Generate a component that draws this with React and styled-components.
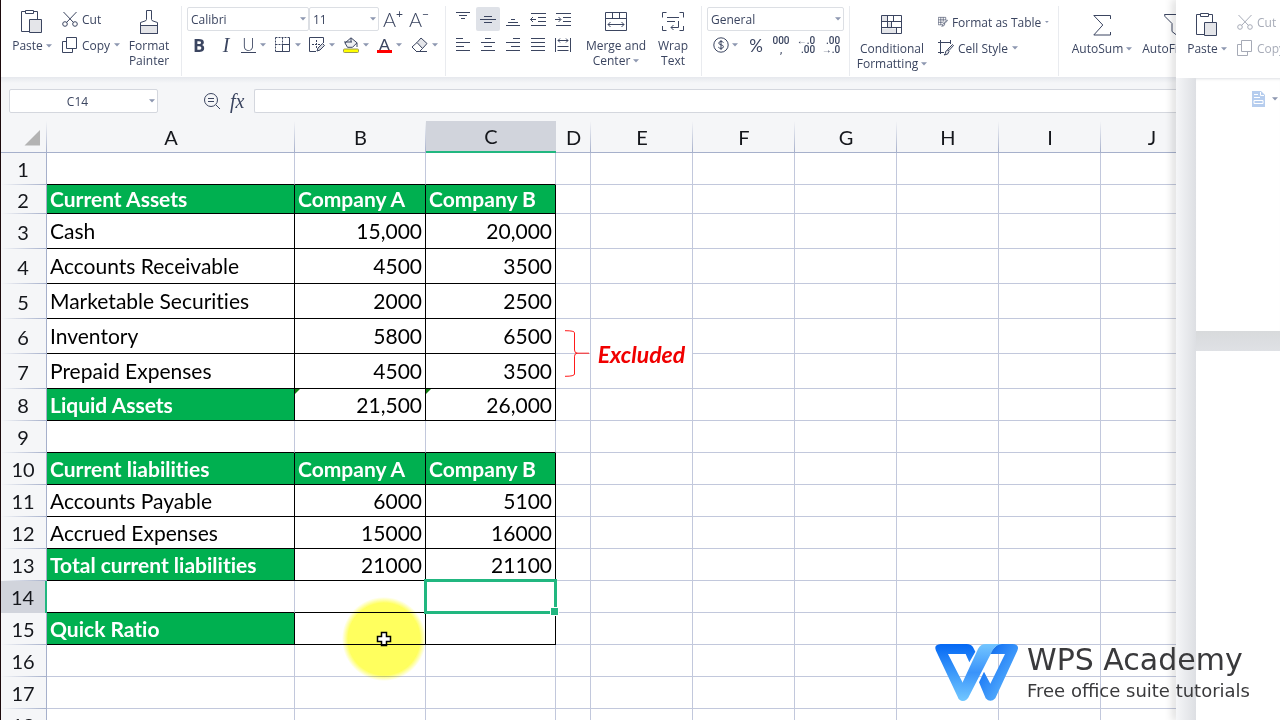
import React from 'react';
import styled, { createGlobalStyle, css } from 'styled-components';

const ink = '#3b4560';
const line = '#c2c8dc';
const headLine = '#a6b0cb';
const accent = '#21b780';
const green = '#00b050';

const GlobalStyle = createGlobalStyle`
  * {
    box-sizing: border-box;
  }

  body {
    margin: 0;
    overflow: hidden;
    background: #ffffff;
    font-family: 'Open Sans', 'Noto Sans', sans-serif;
    color: ${ink};
  }

  button, input, select {
    margin: 0;
    font: inherit;
    color: inherit;
  }
`;

const Desktop = styled.div`
  position: relative;
  display: flex;
  height: 100vh;
  overflow: hidden;
  border-left: 1px solid #1c0a0c;
`;

const SheetWindow = styled.main`
  flex: 1;
  min-width: 0;
  display: flex;
  flex-direction: column;
  overflow: hidden;
  background: #f5f6f8;
`;

const Ribbon = styled.header`
  position: relative;
  display: flex;
  flex: none;
  height: ${({ $tall }) => ($tall ? '78px' : '77px')};
  overflow: hidden;
  background: #ffffff;
  font-size: 12px;
`;

const RibbonShade = styled.div`
  flex: none;
  height: 6px;
  background: linear-gradient(#e6e8ed, #f5f6f8);
`;

const Group = styled.div`
  display: flex;
  flex: none;
  padding: 0 ${({ $right = 5 }) => $right}px 0 ${({ $left = 5 }) => $left}px;
  border-right: 1px solid;
  border-image: linear-gradient(#fff 7px, #e9ebef 7px, #e9ebef 75px, #fff 75px) 1;
`;

const Tools = styled.div`
  display: flex;
  flex: none;
  flex-direction: column;
  gap: 2px;
  width: ${({ $width }) => ($width ? `${$width}px` : 'auto')};
  padding-top: ${({ $top = 7 }) => $top}px;
  padding-left: ${({ $left = 0 }) => $left}px;
`;

const ToolRow = styled.div`
  display: flex;
  align-items: center;
  height: 24px;
  gap: ${({ $gap = 0 }) => $gap}px;
`;

const plainButton = css`
  border: 0;
  padding: 0;
  background: none;
  white-space: nowrap;
`;

const BigButton = styled.button`
  ${plainButton}
  display: flex;
  flex: none;
  flex-direction: column;
  align-items: center;
  gap: 4px;
  width: ${({ $width = 50 }) => $width}px;
  padding-top: ${({ $top = 10 }) => $top}px;
  line-height: 15px;
`;

const BigIcon = styled.span`
  display: flex;
  align-items: center;
  height: 24px;
`;

const LabelLine = styled.span`
  display: flex;
  justify-content: center;
  align-items: center;
  gap: 3px;
`;

const InlineButton = styled.button`
  ${plainButton}
  display: flex;
  align-items: center;
  gap: 4px;
  height: 24px;
  opacity: ${({ disabled }) => (disabled ? 0.45 : 1)};
`;

const ToolButton = styled.button`
  ${plainButton}
  display: flex;
  flex: none;
  justify-content: center;
  align-items: center;
  width: ${({ $width = 24 }) => $width}px;
  height: 24px;
  border-radius: 2px;
  background: ${({ $active }) => ($active ? '#dfe2e8' : 'none')};
`;

const SplitButton = styled.button`
  ${plainButton}
  display: flex;
  flex: none;
  align-items: center;
  gap: 4px;
  width: ${({ $width = 34 }) => $width}px;
  height: 24px;
`;

const Bold = styled.b`
  font-size: 18px;
  line-height: 20px;
`;

const Italic = styled.i`
  font-family: 'Liberation Serif', serif;
  font-size: 20px;
  line-height: 20px;
`;

const Underline = styled.span`
  width: 15px;
  border-bottom: 1px solid ${ink};
  font-family: Lato, sans-serif;
  font-weight: 300;
  font-size: 17px;
  line-height: 15px;
`;

const FontLetter = styled.span`
  display: flex;
  align-items: flex-start;
  font-family: Lato, sans-serif;
  font-weight: 300;
  font-size: 20px;
  line-height: 20px;

  sup {
    font-weight: 400;
    font-size: 12px;
    line-height: 10px;
  }
`;

const ColorLetter = styled.span`
  width: 15px;
  border-bottom: 3px solid #ff0000;
  font-family: Lato, sans-serif;
  font-size: 16px;
  line-height: 13px;
`;

const Percent = styled.span`
  font-family: Lato, sans-serif;
  font-size: 17px;
`;

const Digits = styled.span`
  font-family: Roboto, sans-serif;
  font-weight: 500;
  font-size: 10px;
  line-height: 9px;
  text-align: ${({ $align = 'center' }) => $align};
`;

const Field = styled.label`
  display: grid;
  flex: none;
  align-items: center;
  width: ${({ $width }) => $width}px;
  height: 24px;

  > * {
    grid-area: 1 / 1;
  }

  > svg {
    justify-self: end;
    margin-right: 3px;
    pointer-events: none;
  }
`;

const Select = styled.select`
  width: 100%;
  height: 24px;
  padding: 0 3px;
  appearance: none;
  border: 1px solid #dcdfe4;
  border-radius: 2px;
  background: #ffffff;
`;

const FormulaBar = styled.div`
  display: flex;
  flex: none;
  align-items: center;
  height: 38px;
  padding: 0 0 2px 8px;
  font-size: 12px;
`;

const NameBox = styled.input`
  width: 100%;
  height: 24px;
  padding: 0 12px 0 0;
  border: 1px solid #d4d7de;
  border-radius: 2px;
  background: #ffffff;
  text-align: center;
`;

const FormulaTools = styled.div`
  display: flex;
  align-items: center;
  gap: 9px;
  width: 96px;
  padding-left: 45px;
`;

const FormulaInput = styled.input`
  flex: 1;
  min-width: 0;
  height: 24px;
  border: 1px solid #d4d7de;
  border-right: 0;
  border-radius: 2px 0 0 2px;
  background: #ffffff;
`;

const Fx = styled.i`
  font-family: 'Liberation Serif', serif;
  font-size: 20px;
  line-height: 20px;
`;

const Grid = styled.table`
  flex: none;
  align-self: flex-start;
  width: max-content;
  table-layout: fixed;
  border-spacing: 0;
  background: #ffffff;
  color: #000000;
  font-family: Lato, 'Liberation Sans', sans-serif;
  font-size: 21px;
  font-variant-ligatures: none;
  line-height: 24px;
`;

const headCell = css`
  padding: 0;
  background: #f5f6f8;
  color: #15171c;
  font-weight: 400;
  font-size: 20px;
  text-align: center;
`;

const ColumnHead = styled.th`
  ${headCell}
  height: 32px;
  border-bottom: 1px solid ${headLine};
  background-image: linear-gradient(transparent, ${headLine});
  background-repeat: no-repeat;
  background-position: right top;
  background-size: 1px 100%;

  ${({ $selected }) =>
    $selected &&
    css`
      border-bottom: 2px solid ${accent};
      background: #d1d4dc;
    `}
`;

const Corner = styled(ColumnHead)`
  > svg {
    display: block;
    margin: 2px 7px 0 auto;
  }
`;

const RowHead = styled.th`
  ${headCell}
  padding-right: 1px;
  border-right: 1px solid ${headLine};
  background-image: linear-gradient(90deg, transparent, ${headLine});
  background-repeat: no-repeat;
  background-position: left bottom;
  background-size: 100% 1px;

  ${({ $selected }) =>
    $selected &&
    css`
      border-right: 2px solid ${accent};
      background: #d1d4dc;
    `}
`;

const Cell = styled.td`
  position: relative;
  height: ${({ $height }) => $height}px;
  padding: 0 3px;
  border-right: 1px solid ${({ $side }) => ($side ? '#000' : line)};
  border-bottom: 1px solid ${({ $under }) => ($under ? '#000' : line)};
  background: ${({ $filled }) => ($filled ? green : 'none')};
  color: ${({ $filled }) => ($filled ? '#fff' : '#000')};
  font-weight: ${({ $filled }) => ($filled ? 700 : 400)};
  text-align: ${({ $number }) => ($number ? 'right' : 'left')};
  white-space: nowrap;

  ${({ $flag }) =>
    $flag &&
    css`
      background: linear-gradient(135deg, #107c10 3px, transparent 4px);
    `}
`;

const NoteCell = styled(Cell)`
  padding: 0;
  color: #f00000;
  font-weight: 700;
  font-style: italic;
  font-size: 23px;
  text-align: center;
`;

const Brace = styled.svg`
  position: absolute;
  top: 11px;
  left: 9px;
  z-index: 1;
`;

const Selection = styled.div`
  position: absolute;
  inset: -2px;
  z-index: 1;
  border: 3px solid ${accent};

  &::after {
    content: '';
    position: absolute;
    right: -5px;
    bottom: -5px;
    width: 7px;
    height: 7px;
    border: 1px solid #ffffff;
    background: ${accent};
  }
`;

const Pointer = styled.div`
  position: absolute;
  top: -16px;
  left: 47px;
  z-index: 2;
  display: grid;
  place-items: center;
  width: 84px;
  height: 84px;
  background: radial-gradient(circle, #ffff5e 36px, transparent 42px);
  mix-blend-mode: multiply;
`;

const SideWindow = styled.aside`
  position: relative;
  display: flex;
  flex: none;
  flex-direction: column;
  width: 104px;
  overflow: hidden;
  background: #ffffff;
`;

const SideShadow = styled.div`
  position: relative;
  flex: none;
  width: 0;
  box-shadow: 0 0 8px 1px rgba(0, 0, 0, 0.5);
`;

const SideBody = styled.div`
  display: flex;
  flex: 1;
`;

const Gutter = styled.div`
  flex: none;
  width: 20px;
  background: linear-gradient(90deg, #f5f6f8, #dddfe3);
`;

const Pages = styled.div`
  display: flex;
  flex: 1;
  flex-direction: column;
  gap: 20px;
  background: linear-gradient(#ffffff 253px, #d8dadc 253px, #dfe1e5 273px);
`;

const Page = styled.section`
  flex: ${({ $height }) => ($height ? `0 0 ${$height}px` : '1')};
  padding: 13px 2px;
  background: #ffffff;
  box-shadow: ${({ $height }) => ($height ? 'inset 0 3px 3px -2px #dddfe3' : 'none')};
`;

const PasteOptions = styled.button`
  ${plainButton}
  display: flex;
  align-items: center;
  gap: 7px;
  margin-left: auto;
`;

const Watermark = styled.div`
  position: absolute;
  right: 30px;
  bottom: 16px;
  z-index: 5;
  display: flex;
  align-items: center;
  gap: 8px;
  color: #3a3a3c;
  font-family: 'DejaVu Sans', sans-serif;
`;

const Brand = styled.div`
  font-size: 30px;
  line-height: 36px;
`;

const Tagline = styled.div`
  font-size: 18px;
  line-height: 26px;
`;

const Icon = ({ w = 16, h = 16, children, ...rest }) => (
  <svg width={w} height={h} viewBox={`0 0 ${w} ${h}`} fill='none' stroke={ink} aria-hidden='true' {...rest}>
    {children}
  </svg>
);

const Caret = () => (
  <svg width='6' height='4' viewBox='0 0 6 4' aria-hidden='true'>
    <path d='M0 .3h6L3 3.6z' fill='#8d97b0' />
  </svg>
);

const PasteIcon = () => (
  <Icon w={22} h={24}>
    <path d='M8 21.5H.5v-20h4M12.5 1.5h4V9' />
    <path d='M4.500.5h8v3h-8z' />
    <path d='M8.500 9.500h12v13h-12z' fill='#e4e5e9' />
  </Icon>
);

const CutIcon = () => (
  <Icon>
    <path d='M1.500 1l10 10.500M14.500 1l-10 10.500' />
    <circle cx='3' cy='13' r='2.300' />
    <circle cx='13' cy='13' r='2.300' />
  </Icon>
);

const CopyIcon = () => (
  <Icon>
    <path d='M4.500.5h10v11h-10z' />
    <path d='M4.500 4.500h-4v11h10v-4' />
  </Icon>
);

const BrushIcon = () => (
  <Icon w={18} h={24}>
    <path d='M.5 15.500h17v8H.5z' fill='#e4e5e9' />
    <path d='M6.500.5h5V9.500q0 1 1.500 1.500l4.500 1.500v11H.5v-11L5 11q1.500-.5 1.500-1.500z' />
  </Icon>
);

const BorderIcon = () => (
  <Icon>
    <path d='M.5.5h14M.5.5v14M7.500.5v14M.5 7.500h14' strokeDasharray='2 1' />
    <path d='M.5 14.500h14V.5' />
    <path d='M7.500 7v8M7 7.500h8' />
  </Icon>
);

const PenCellIcon = () => (
  <Icon>
    <path d='M7 14.500H.5V.5h14V6' />
    <path d='M7.500 3v9M3 7.500h9' strokeDasharray='2 1' />
    <path d='M8 14l1-3 4.500-4.500 2 2L11 13z' fill='#d9dbe1' />
  </Icon>
);

const BucketIcon = () => (
  <Icon>
    <path d='M2 6L8 .8l6 5-4.500 4.500h-5z' fill='#eef0f3' />
    <path d='M1 5h8M8 1v4M14 6v4' />
    <rect x='.5' y='12' width='15' height='3.500' rx='1' fill='#ffff00' stroke='#9a9a5a' />
  </Icon>
);

const EraserIcon = () => (
  <Icon w={17}>
    <path d='M6 5.500L10 1l6 5.500-4.500 5z' fill='#e4e5e9' />
    <path d='M6 5.500L1 10l4.500 4.500h3l3-3M5 14.500h11' />
  </Icon>
);

const MergeIcon = () => (
  <Icon w={22} h={20}>
    <path d='M.5.5h21v18H.5zM.5 6.500h21M7.500.5v6M14.500.5v6M3 12.500h16M5.500 10L3 12.500 5.500 15M16.500 10l2.500 2.500-2.500 2.500' />
  </Icon>
);

const WrapIcon = () => (
  <Icon w={22} h={20}>
    <path d='M4.500.5h-4v5M17.500.5h4v5M.5 14v4.500h4M21.500 14v4.500h-4M5 5.500h12M5 9.500h8M16.500 9v6.500H9M11.500 13L9 15.500l2.500 2.500' />
  </Icon>
);

const ConditionalIcon = () => (
  <Icon w={22} h={20}>
    <path d='M6.500 7.500h4v6h-4zM.5 1h6v6h-6zM.5 13.500h15v5H.5z' fill='#e4e5e9' stroke='none' />
    <path d='M.5.5h20v18H.5zM.5 6.500h20M.5 12.500h20M6.500.5v12M10.500 6.500v6M12.500.5v6M15.500 12.500v6' />
  </Icon>
);

const TableStyleIcon = () => (
  <Icon>
    <path d='M7 12.500H.5V.5h12V5M.5 4.500h12M.5 8.500H8M4.500.5v12M8.500.5v7' />
    <path d='M14.500 4.500l1 1-4.500 5-1.500-1zM9.500 10l1.500 1.500q-.5 3.500-5 3.500 2-1.500 1.500-3 1-2 2-2z' fill='#e4e5e9' />
  </Icon>
);

const CellStyleIcon = () => (
  <Icon>
    <path d='M0 2.500h13M2.500 0v14M0 12.500h6M12.500 0v4' />
    <path d='M14.500 4.500l1 1-4.500 5-1.500-1zM9.500 10l1.500 1.500q-.5 3.500-5 3.500 2-1.500 1.500-3 1-2 2-2z' fill='#e4e5e9' />
  </Icon>
);

const SumIcon = () => (
  <Icon w={18} h={21}>
    <path d='M17.500 4V.5H.8l9 9.500-9 10h16.700V17' />
  </Icon>
);

const FunnelIcon = () => (
  <Icon w={20} h={22}>
    <path d='M.5.5h19v2l-7 7V21L8 17.500v-8l-7-7z' />
  </Icon>
);

const ALIGN = {
  top: 'M1 1.500h14M4 4.500h8M6 7.500h4',
  middle: 'M0 8.500h16M4 5.500h8M4 11.500h8',
  bottom: 'M1 14.500h14M3 11.500h10M6 8.500h4',
  outdent: 'M1 2.500h15M8 6.500h8M8 10.500h8M1 14.500h15M.5 8.500h5.500M3 6L.5 8.500 3 11',
  indent: 'M1 2.500h15M8 6.500h8M8 10.500h8M1 14.500h15M0 8.500h5.500M3.500 6L6 8.500 3.500 11',
  left: 'M1 1.500h7M1 5.500h14M1 9.500h8M1 13.500h14',
  center: 'M5 1.500h6M1 5.500h14M4 9.500h8M1 13.500h14',
  right: 'M8 1.500h7M1 5.500h14M6 9.500h9M1 13.500h14',
  justify: 'M1 1.500h14M1 5.500h14M1 9.500h14M1 13.500h14',
  distribute: 'M.5 1v14M15.500 1v14M2.500 9.500h11M2.500 13.500h11M3 3.500h10M5 1.500l-2 2 2 2M11 1.500l2 2-2 2',
};

const AlignButton = ({ kind, active }) => (
  <ToolButton $active={active} aria-label={kind}>
    <Icon>
      <path d={ALIGN[kind]} />
    </Icon>
  </ToolButton>
);

const Clipboard = ({ top = 10, disabled }) => (
  <>
    <BigButton $top={top}>
      <BigIcon>
        <PasteIcon />
      </BigIcon>
      <LabelLine>
        Paste <Caret />
      </LabelLine>
    </BigButton>
    <Tools $top={top - 3} $left={5} $width={67}>
      <InlineButton disabled={disabled}>
        <CutIcon /> Cut
      </InlineButton>
      <InlineButton disabled={disabled}>
        <CopyIcon /> Copy <Caret />
      </InlineButton>
    </Tools>
  </>
);

const SheetRibbon = () => (
  <Ribbon>
    <Group $left={6} $right={7}>
      <Clipboard />
      <BigButton>
        <BigIcon>
          <BrushIcon />
        </BigIcon>
        <span>
          Format
          <br />
          Painter
        </span>
      </BigButton>
    </Group>

    <Group $right={4}>
      <Tools>
        <ToolRow>
          <Field $width={122}>
            <Select aria-label='Font' defaultValue='Calibri'>
              <option>Calibri</option>
            </Select>
            <Caret />
          </Field>
          <Field $width={70}>
            <Select aria-label='Font size' defaultValue='11'>
              <option>11</option>
            </Select>
            <Caret />
          </Field>
          <ToolButton $width={28}>
            <FontLetter>
              A<sup>+</sup>
            </FontLetter>
          </ToolButton>
          <ToolButton>
            <FontLetter>
              A<sup>−</sup>
            </FontLetter>
          </ToolButton>
        </ToolRow>
        <ToolRow>
          <ToolButton>
            <Bold>B</Bold>
          </ToolButton>
          <ToolButton $width={30}>
            <Italic>I</Italic>
          </ToolButton>
          <SplitButton>
            <Underline>U</Underline>
            <Caret />
          </SplitButton>
          <SplitButton aria-label='Borders'>
            <BorderIcon />
            <Caret />
          </SplitButton>
          <SplitButton aria-label='Draw border'>
            <PenCellIcon />
            <Caret />
          </SplitButton>
          <SplitButton aria-label='Fill color'>
            <BucketIcon />
            <Caret />
          </SplitButton>
          <SplitButton>
            <ColorLetter>A</ColorLetter>
            <Caret />
          </SplitButton>
          <SplitButton $width={30} aria-label='Clear'>
            <EraserIcon />
            <Caret />
          </SplitButton>
        </ToolRow>
      </Tools>
    </Group>

    <Group $right={12}>
      <Tools>
        <ToolRow $gap={1}>
          <AlignButton kind='top' />
          <AlignButton kind='middle' active />
          <AlignButton kind='bottom' />
          <AlignButton kind='outdent' />
          <AlignButton kind='indent' />
        </ToolRow>
        <ToolRow $gap={1}>
          <AlignButton kind='left' />
          <AlignButton kind='center' />
          <AlignButton kind='right' />
          <AlignButton kind='justify' />
          <AlignButton kind='distribute' />
        </ToolRow>
      </Tools>
      <BigButton $width={82}>
        <BigIcon>
          <MergeIcon />
        </BigIcon>
        <span>
          <LabelLine>Merge and</LabelLine>
          <LabelLine>
            Center <Caret />
          </LabelLine>
        </span>
      </BigButton>
      <BigButton $width={32}>
        <BigIcon>
          <WrapIcon />
        </BigIcon>
        <span>
          Wrap
          <br />
          Text
        </span>
      </BigButton>
    </Group>

    <Group>
      <Tools>
        <Field $width={137}>
          <Select aria-label='Number format' defaultValue='General'>
            <option>General</option>
          </Select>
          <Caret />
        </Field>
        <ToolRow $gap={1}>
          <ToolButton $width={36}>
            <LabelLine>
              <Icon>
                <circle cx='8' cy='8' r='7.200' />
                <path d='M10.500 5.500Q9.500 4.500 8 4.500q-2.200 0-2.200 1.600 0 1.300 2.200 1.700 2.400.4 2.400 1.900 0 1.700-2.400 1.700-1.700 0-2.700-1.200M8 3v10' />
              </Icon>
              <Caret />
            </LabelLine>
          </ToolButton>
          <ToolButton>
            <Percent>%</Percent>
          </ToolButton>
          <ToolButton>
            <Digits>
              000
              <br />,
            </Digits>
          </ToolButton>
          <ToolButton>
            <Digits $align='right'>
              ←.0
              <br />
              .00
            </Digits>
          </ToolButton>
          <ToolButton>
            <Digits $align='right'>
              .00
              <br />
              →.0
            </Digits>
          </ToolButton>
        </ToolRow>
      </Tools>
    </Group>

    <Group $right={9}>
      <BigButton $width={74} $top={13}>
        <BigIcon>
          <ConditionalIcon />
        </BigIcon>
        <span>
          <LabelLine>Conditional</LabelLine>
          <LabelLine>
            Formatting <Caret />
          </LabelLine>
        </span>
      </BigButton>
      <Tools $top={10} $left={9} $width={120}>
        <InlineButton>
          <TableStyleIcon /> Format as Table <Caret />
        </InlineButton>
        <InlineButton>
          <CellStyleIcon /> Cell Style <Caret />
        </InlineButton>
      </Tools>
    </Group>

    <Group>
      <BigButton $width={76} $top={13}>
        <BigIcon>
          <SumIcon />
        </BigIcon>
        <LabelLine>
          AutoSum <Caret />
        </LabelLine>
      </BigButton>
      <BigButton $width={68} $top={13}>
        <BigIcon>
          <FunnelIcon />
        </BigIcon>
        <LabelLine>
          AutoFilter <Caret />
        </LabelLine>
      </BigButton>
    </Group>
  </Ribbon>
);

const COLUMNS = [
  ['A', 248],
  ['B', 131],
  ['C', 130],
  ['D', 35],
  ['E', 102],
  ['F', 102],
  ['G', 102],
  ['H', 102],
  ['I', 102],
  ['J', 102],
];

// kind: head = all three cells filled, total = only the label filled
const ROWS = [
  { height: 32 },
  { height: 29, kind: 'head', values: ['Current Assets', 'Company A', 'Company B'] },
  { height: 35, kind: 'data', values: ['Cash', '15,000', '20,000'] },
  { height: 35, kind: 'data', values: ['Accounts Receivable', '4500', '3500'] },
  { height: 35, kind: 'data', values: ['Marketable Securities', '2000', '2500'] },
  { height: 35, kind: 'data', values: ['Inventory', '5800', '6500'] },
  { height: 35, kind: 'data', values: ['Prepaid Expenses', '4500', '3500'] },
  { height: 32, kind: 'total', flag: true, values: ['Liquid Assets', '21,500', '26,000'] },
  { height: 32 },
  { height: 32, kind: 'head', values: ['Current liabilities', 'Company A', 'Company B'] },
  { height: 32, kind: 'data', values: ['Accounts Payable', '6000', '5100'] },
  { height: 32, kind: 'data', values: ['Accrued Expenses', '15000', '16000'] },
  { height: 32, kind: 'total', values: ['Total current liabilities', '21000', '21100'] },
  { height: 32 },
  { height: 32, kind: 'total', values: ['Quick Ratio', '', ''] },
  { height: 32 },
  { height: 32 },
  { height: 32 },
];

const renderCell = (row, index, col) => {
  const name = `${COLUMNS[col][0]}${index + 1}`;
  const next = ROWS[index + 1];
  const inTable = col < 3;

  if (name === 'E7') return null;
  if (name === 'E6') {
    return (
      <NoteCell key={name} rowSpan={2}>
        Excluded
      </NoteCell>
    );
  }

  return (
    <Cell
      key={name}
      $height={row.height}
      $side={inTable && row.kind}
      $under={inTable && (row.kind || (next && next.kind))}
      $filled={inTable && (row.kind === 'head' || (row.kind === 'total' && col === 0))}
      $number={col > 0 && row.kind !== 'head'}
      $flag={row.flag && (col === 1 || col === 2)}
    >
      {inTable && row.values ? row.values[col] : null}
      {name === 'D6' && (
        <Brace width='24' height='48' viewBox='0 0 24 48' fill='none' stroke='#ff1a1a'>
          <path d='M0 .7q9.500 0 9.500 2V20q0 3.200 3 3.200H24M12.500 23.200q-3 0-3 3V44q0 2.300-9.500 2.300' />
        </Brace>
      )}
      {name === 'C14' && <Selection />}
      {name === 'B15' && (
        <Pointer>
          <svg width='16' height='16' viewBox='0 0 16 16' aria-hidden='true'>
            <path d='M5.500 1.500h5v4h4v5h-4v4h-5v-4h-4v-5h4z' fill='#fff' stroke='#000' strokeWidth='1.500' />
          </svg>
        </Pointer>
      )}
    </Cell>
  );
};

const Sheet = () => (
  <Grid>
    <colgroup>
      <col width={46} />
      {COLUMNS.map(([letter, width]) => (
        <col key={letter} width={width} />
      ))}
    </colgroup>
    <thead>
      <tr>
        <Corner as='td'>
          <svg width='16' height='16' viewBox='0 0 16 16' aria-hidden='true'>
            <path d='M16 0v15.500H.5z' fill='#b3b3b3' />
          </svg>
        </Corner>
        {COLUMNS.map(([letter]) => (
          <ColumnHead key={letter} scope='col' $selected={letter === 'C'}>
            {letter}
          </ColumnHead>
        ))}
      </tr>
    </thead>
    <tbody>
      {ROWS.map((row, index) => (
        <tr key={index}>
          <RowHead scope='row' $selected={index === 13}>
            {index + 1}
          </RowHead>
          {COLUMNS.map((column, col) => renderCell(row, index, col))}
        </tr>
      ))}
    </tbody>
  </Grid>
);

const Logo = () => (
  <svg width='84' height='60' viewBox='111 66 252 180' aria-hidden='true'>
    <defs>
      <linearGradient id='deep' x1='0' y1='0' x2='0' y2='1'>
        <stop offset='0' stopColor='#0468f4' />
        <stop offset='1' stopColor='#72c8ff' />
      </linearGradient>
      <linearGradient id='strap' x1='0' y1='0' x2='0' y2='1'>
        <stop offset='0' stopColor='#74c6ff' />
        <stop offset='0.500' stopColor='#3a93fa' />
        <stop offset='1' stopColor='#72c8ff' />
      </linearGradient>
      <linearGradient id='fold' x1='0' y1='0' x2='1' y2='1'>
        <stop offset='0' stopColor='#0b4fb4' />
        <stop offset='0.300' stopColor='#1f7cf6' />
        <stop offset='1' stopColor='#72c8ff' />
      </linearGradient>
    </defs>
    <path
      d='M128 69H206Q220 69 226 80L232 92L214 124L203 99H150L195 187L207 234Q195 246 181 232L114 89Q106 71 128 69z'
      fill='url(#deep)'
    />
    <path d='M300 69H344Q366 71 358 89L292 232Q277 247 263 232L243 184L258 152L277 188L321 99H270z' fill='url(#fold)' />
    <path d='M262 69H312Q292 71 284 88L210 232Q195 247 182 234L180 214L240 84Q248 69 262 69z' fill='url(#strap)' />
  </svg>
);

const App = () => (
  <Desktop>
    <GlobalStyle />
    <SheetWindow>
      <SheetRibbon />
      <RibbonShade />
      <FormulaBar>
        <Field $width={149}>
          <NameBox aria-label='Name box' defaultValue='C14' />
          <Caret />
        </Field>
        <FormulaTools>
          <Icon w={18} h={18}>
            <circle cx='8' cy='8' r='6.500' />
            <path d='M5 6.500h6M5 9.500h6M13 13l4 4' />
          </Icon>
          <Fx>fx</Fx>
        </FormulaTools>
        <FormulaInput aria-label='Formula' />
      </FormulaBar>
      <Sheet />
    </SheetWindow>
    <SideShadow />
    <SideWindow>
      <Ribbon $tall>
        <Group $left={6}>
          <Clipboard top={13} disabled />
        </Group>
      </Ribbon>
      <SideBody>
        <Gutter />
        <Pages>
          <Page $height={253}>
            <PasteOptions aria-label='Paste options'>
              <Icon w={13} h={16} stroke='none'>
                <path d='M0 0h9l4 4v12H0z' fill='#b6cdee' />
                <path d='M2 3.500h4M2 6.500h6M2 9.500h9v3H2zM8.500 1v3.500H12' stroke='#fff' />
              </Icon>
              <Caret />
            </PasteOptions>
          </Page>
          <Page />
        </Pages>
      </SideBody>
    </SideWindow>
    <Watermark>
      <Logo />
      <div>
        <Brand>WPS Academy</Brand>
        <Tagline>Free office suite tutorials</Tagline>
      </div>
    </Watermark>
  </Desktop>
);

export default App;
